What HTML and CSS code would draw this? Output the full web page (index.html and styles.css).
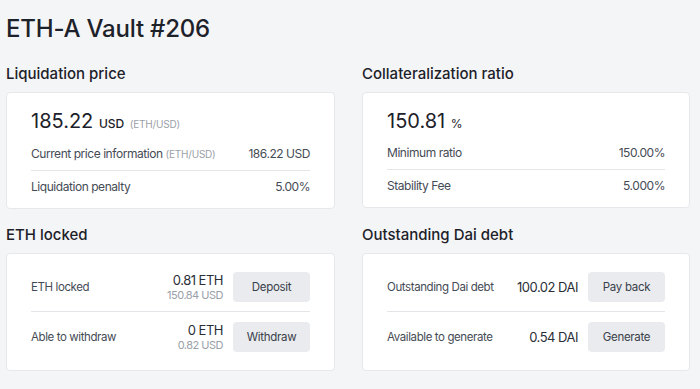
FILE: index.html
```html
<!DOCTYPE html>
<html lang="en">
<head>
    <meta charset="UTF-8">
    <meta name="viewport" content="width=device-width, initial-scale=1.0">
    <title>ETH-A Vault #206</title>
    <link rel="stylesheet" href="styles.css">
</head>
<body>
    <h1 class="title">ETH-A Vault #206</h1>
    <div class="grid">
        <section>
            <h2>Liquidation price</h2>
            <div class="card info-card">
                <div class="big">185.22 <span class="unit">USD</span> <span class="pair">(ETH/USD)</span></div>
                <div class="info-row top">
                    <span>Current price information <span class="pair">(ETH/USD)</span></span>
                    <span>186.22 USD</span>
                </div>
                <div class="info-row">
                    <span>Liquidation penalty</span>
                    <span>5.00%</span>
                </div>
            </div>
        </section>
        <section>
            <h2>Collateralization ratio</h2>
            <div class="card info-card">
                <div class="big">150.81 <span class="unit pct">%</span></div>
                <div class="info-row top">
                    <span>Minimum ratio</span>
                    <span>150.00%</span>
                </div>
                <div class="info-row">
                    <span>Stability Fee</span>
                    <span>5.000%</span>
                </div>
            </div>
        </section>
        <section>
            <h2>ETH locked</h2>
            <div class="card action-card">
                <div class="action-row top">
                    <span class="label">ETH locked</span>
                    <div class="amount">
                        <div class="main">0.81 ETH</div>
                        <div class="sub">150.84 USD</div>
                    </div>
                    <button type="button">Deposit</button>
                </div>
                <div class="action-row">
                    <span class="label">Able to withdraw</span>
                    <div class="amount">
                        <div class="main">0 ETH</div>
                        <div class="sub">0.82 USD</div>
                    </div>
                    <button type="button">Withdraw</button>
                </div>
            </div>
        </section>
        <section>
            <h2>Outstanding Dai debt</h2>
            <div class="card action-card">
                <div class="action-row top">
                    <span class="label">Outstanding Dai debt</span>
                    <div class="amount">
                        <div class="main">100.02 DAI</div>
                    </div>
                    <button type="button">Pay back</button>
                </div>
                <div class="action-row">
                    <span class="label">Available to generate</span>
                    <div class="amount">
                        <div class="main">0.54 DAI</div>
                    </div>
                    <button type="button">Generate</button>
                </div>
            </div>
        </section>
    </div>
</body>
</html>
```

FILE: styles.css
```css
body {
    font-family: Inter, "Noto Sans", sans-serif;
    background-color: #f4f5f7;
    color: #1d2129;
    margin: 0;
    padding: 15px 10px 0 6px;
}
.title {
    font-size: 24px;
    font-weight: 500;
    letter-spacing: -0.2px;
    line-height: 28px;
    margin: 0 0 21px;
}
.grid {
    display: grid;
    grid-template-columns: 329px 328px;
    column-gap: 27px;
    row-gap: 16px;
}
h2 {
    font-size: 15px;
    font-weight: 500;
    line-height: 20px;
    margin: 0 0 8px;
}
.card {
    background-color: #fff;
    border: 1px solid #e6e8eb;
    border-radius: 4px;
}
.info-card {
    padding: 17px 24px 13px;
}
.big {
    font-size: 20px;
    line-height: 23px;
    margin-bottom: 10px;
}
.unit {
    font-size: 12px;
    font-weight: 500;
}
.pct {
    font-weight: 400;
}
.pair {
    font-size: 10px;
    letter-spacing: -0.2px;
    color: #9aa0a8;
}
.info-row {
    display: flex;
    justify-content: space-between;
    font-size: 12px;
    letter-spacing: -0.45px;
    line-height: 16px;
    color: #454b55;
    padding: 8px 0 0;
}
.info-row.top {
    padding: 0 0 8px;
    border-bottom: 1px solid #e3e5e8;
}
.action-card {
    padding: 18px 24px;
}
.action-row {
    display: flex;
    align-items: center;
    padding: 10px 0 0;
}
.action-row.top {
    padding: 0 0 9px;
    border-bottom: 1px solid #e3e5e8;
}
.label {
    flex: 1;
    font-size: 11.5px;
    letter-spacing: -0.4px;
    color: #454b55;
}
.amount {
    text-align: right;
    margin-right: 10px;
    letter-spacing: -0.5px;
}
.main {
    font-size: 13px;
    line-height: 16px;
    color: #2a2f37;
}
.sub {
    font-size: 11px;
    line-height: 14px;
    color: #9aa0a8;
}
button {
    width: 77px;
    height: 30px;
    border: none;
    border-radius: 4px;
    background-color: #e9ebee;
    color: #3a404a;
    font-family: Inter, "Noto Sans", sans-serif;
    font-size: 11.5px;
    letter-spacing: -0.3px;
    cursor: pointer;
}
```
